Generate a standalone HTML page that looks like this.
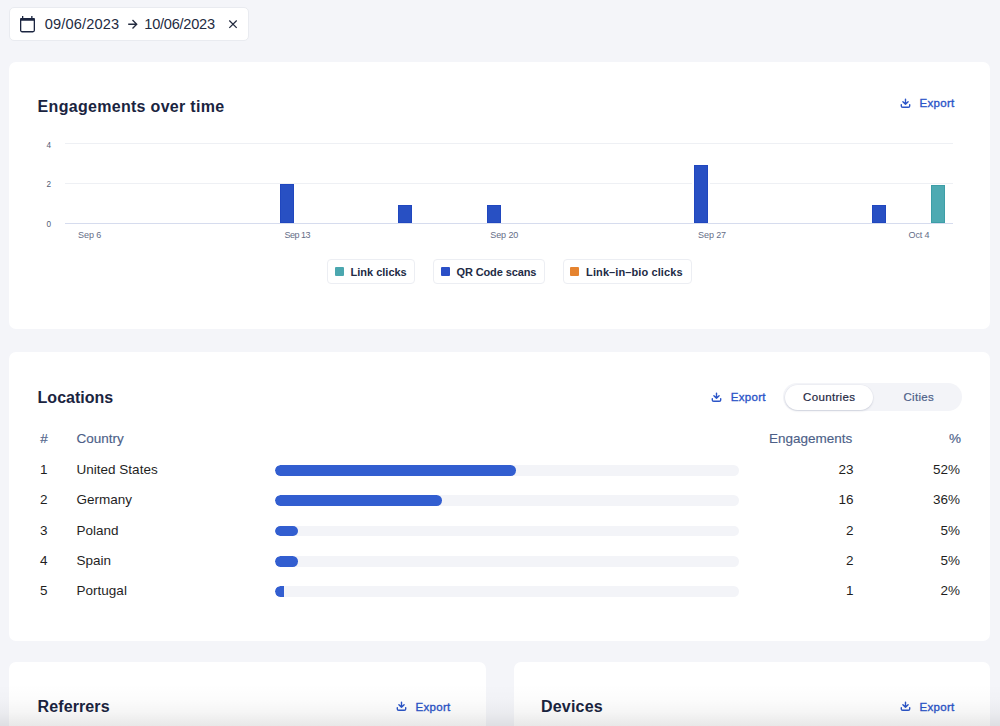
<!DOCTYPE html>
<html><head><meta charset="utf-8">
<style>
*{box-sizing:border-box;margin:0;padding:0}
html,body{width:1000px;height:726px;overflow:hidden;background:#f4f5f9;font-family:"Liberation Sans",sans-serif;position:relative}
.abs{position:absolute}
.t{position:absolute;white-space:nowrap;line-height:1}
.card{position:absolute;background:#fff;border-radius:7px}
.title{font-weight:700;color:#1a2440;font-size:16px}
.exp{color:#2b55c8;font-weight:400;font-size:11.5px;letter-spacing:0.3px;-webkit-text-stroke:0.35px #2b55c8}
.ylab{color:#535c75;font-size:8.2px}
.xlab{color:#646d87;font-size:9px;letter-spacing:-0.1px}
.grid{position:absolute;left:64.5px;width:888.5px;height:1px;background:#eef0f4}
.bar{position:absolute;width:14px;background:#2850c3;border:1px solid #2047bf;border-width:1px 0.6px 0.6px 0.6px;box-shadow:2px 0 0 #fff,-2px 0 0 #fff}
.leg{position:absolute;top:259px;height:25px;border:1px solid #eceef3;border-radius:4px;background:#fff}
.sw{position:absolute;width:9px;height:9px;top:7.2px;border-radius:1px}
.legt{position:absolute;top:7.2px;font-weight:700;font-size:11px;color:#222b45;white-space:nowrap;line-height:1}
.hd{color:#4d5f88;font-size:13.5px;-webkit-text-stroke:0.15px #4d5f88}
.rw{color:#1f1f1f;font-size:13.5px}
.track{position:absolute;left:274.5px;width:464.3px;height:10.8px;background:#f3f4f8;border-radius:5.4px;overflow:hidden}
.fill{position:absolute;left:0;top:0;height:100%;background:#325ed0;border-radius:5.4px}
</style></head><body>

<!-- date range -->
<div class="abs" style="left:9.3px;top:7.2px;width:240px;height:33.8px;background:#fff;border:1px solid #e9ebf0;border-radius:5px"></div>
<svg class="abs" style="left:19px;top:15px" width="17" height="18" viewBox="0 0 17 18">
  <rect x="1.65" y="3.55" width="13.7" height="13.2" rx="1.5" fill="none" stroke="#1b2540" stroke-width="1.3"/>
  <rect x="1.2" y="2.9" width="14.6" height="2.8" rx="0.8" fill="#1b2540"/>
  <rect x="3.0" y="1" width="1.3" height="3" fill="#1b2540"/>
  <rect x="12.2" y="1" width="1.3" height="3" fill="#1b2540"/>
</svg>
<div class="t" style="left:44.8px;top:16.5px;font-size:14.6px;color:#232b3f;letter-spacing:0.15px">09/06/2023</div>
<svg class="abs" style="left:127px;top:18.5px" width="12" height="11" viewBox="0 0 12 11">
  <path d="M1.2 5.2H9.6M5.5 1L9.7 5.2L5.5 9.4" fill="none" stroke="#232b3f" stroke-width="1.35"/>
</svg>
<div class="t" style="left:144.3px;top:16.5px;font-size:14.6px;color:#232b3f;letter-spacing:-0.25px">10/06/2023</div>
<svg class="abs" style="left:228px;top:19px" width="10" height="10" viewBox="0 0 10 10">
  <path d="M1.3 1.5L8.7 8.9M8.7 1.5L1.3 8.9" fill="none" stroke="#232b3f" stroke-width="1.25"/>
</svg>

<!-- card 1 -->
<div class="card" style="left:9.4px;top:61.8px;width:980.3px;height:267.7px"></div>
<div class="t title" style="left:37.6px;top:98.8px;letter-spacing:0.3px">Engagements over time</div>
<svg class="abs" style="left:899px;top:97px" width="13" height="12" viewBox="0 0 13 12">
  <path d="M6.5 2.1V7.3M3.9 4.7L6.5 7.3L9.1 4.7M2.3 7.6V8.9Q2.3 10.3 3.7 10.3H9.3Q10.7 10.3 10.7 8.9V7.6" fill="none" stroke="#2b55c8" stroke-width="1.4" stroke-linecap="round" stroke-linejoin="round"/>
</svg>
<div class="t exp" style="left:919.5px;top:98px">Export</div>

<div class="grid" style="top:143.3px"></div>
<div class="grid" style="top:183.1px"></div>
<div class="grid" style="top:222.9px;background:#d6dcee"></div>
<div class="t ylab" style="left:46.6px;top:141.7px">4</div>
<div class="t ylab" style="left:46.6px;top:181.2px">2</div>
<div class="t ylab" style="left:46.6px;top:220.7px">0</div>
<div class="t xlab" style="left:78.1px;top:230.8px">Sep 6</div>
<div class="t xlab" style="left:284.5px;top:230.8px;letter-spacing:-0.5px">Sep 13</div>
<div class="t xlab" style="left:490.3px;top:230.8px">Sep 20</div>
<div class="t xlab" style="left:698.1px;top:230.8px">Sep 27</div>
<div class="t xlab" style="left:908.5px;top:230.8px">Oct 4</div>

<div class="bar" style="left:280px;top:184.4px;height:38.4px"></div>
<div class="bar" style="left:398.2px;top:204.6px;height:18.2px"></div>
<div class="bar" style="left:486.6px;top:204.6px;height:18.2px"></div>
<div class="bar" style="left:694px;top:165.2px;height:57.6px"></div>
<div class="bar" style="left:871.9px;top:204.5px;height:18.3px"></div>
<div class="bar" style="left:931.3px;top:184.7px;height:38.1px;background:#4eaab2;border-color:#3d9ea7"></div>

<div class="leg" style="left:327.2px;width:88px"><div class="sw" style="left:6.4px;background:#4ba7af"></div><div class="legt" style="left:22.3px">Link clicks</div></div>
<div class="leg" style="left:433.2px;width:111.5px"><div class="sw" style="left:6.4px;background:#2a4fc7"></div><div class="legt" style="left:22.3px"><span style="letter-spacing:-0.12px">QR Code scans</span></div></div>
<div class="leg" style="left:562.8px;width:129px"><div class="sw" style="left:6.4px;background:#e5832f"></div><div class="legt" style="left:22.3px"><span style="letter-spacing:0.1px">Link&ndash;in&ndash;bio clicks</span></div></div>

<!-- card 2 -->
<div class="card" style="left:9.4px;top:351.8px;width:980.3px;height:288.8px"></div>
<div class="t title" style="left:37.6px;top:389.5px">Locations</div>
<svg class="abs" style="left:710px;top:390.7px" width="13" height="12" viewBox="0 0 13 12">
  <path d="M6.5 2.1V7.3M3.9 4.7L6.5 7.3L9.1 4.7M2.3 7.6V8.9Q2.3 10.3 3.7 10.3H9.3Q10.7 10.3 10.7 8.9V7.6" fill="none" stroke="#2b55c8" stroke-width="1.4" stroke-linecap="round" stroke-linejoin="round"/>
</svg>
<div class="t exp" style="left:730.8px;top:392.2px">Export</div>
<div class="abs" style="left:783px;top:383.3px;width:179px;height:28px;background:#f3f4f8;border-radius:14px"></div>
<div class="abs" style="left:784.6px;top:384.9px;width:88.2px;height:25.3px;background:#fff;border-radius:12.6px;box-shadow:0 1px 2px rgba(30,40,80,0.15),0 0 0 0.5px rgba(30,40,80,0.03)"></div>
<div class="t" style="left:803px;top:391.8px;font-size:11.5px;letter-spacing:0.35px;font-weight:400;color:#1e2843;-webkit-text-stroke:0.2px #1e2843">Countries</div>
<div class="t" style="left:903.5px;top:391.8px;font-size:11.5px;letter-spacing:0.3px;color:#4d5f88;-webkit-text-stroke:0.2px #4d5f88">Cities</div>

<div class="t hd" style="left:40.3px;top:432.2px">#</div>
<div class="t hd" style="left:76.5px;top:432.2px">Country</div>
<div class="t hd" style="left:769px;top:432.2px">Engagements</div>
<div class="t hd" style="left:949px;top:432.2px">%</div>

<div class="t rw" style="left:40px;top:462.7px">1</div>
<div class="t rw" style="left:76.6px;top:462.7px">United States</div>
<div class="track" style="top:464.8px"><div class="fill" style="width:241.6px"></div></div>
<div class="t rw" style="right:146.5px;top:462.7px">23</div>
<div class="t rw" style="right:40px;top:462.7px">52%</div>

<div class="t rw" style="left:40px;top:493.2px">2</div>
<div class="t rw" style="left:76.6px;top:493.2px">Germany</div>
<div class="track" style="top:495.2px"><div class="fill" style="width:167.2px"></div></div>
<div class="t rw" style="right:146.5px;top:493.2px">16</div>
<div class="t rw" style="right:40px;top:493.2px">36%</div>

<div class="t rw" style="left:40px;top:523.5px">3</div>
<div class="t rw" style="left:76.6px;top:523.5px">Poland</div>
<div class="track" style="top:525.6px"><div class="fill" style="width:23.5px"></div></div>
<div class="t rw" style="right:146.5px;top:523.5px">2</div>
<div class="t rw" style="right:40px;top:523.5px">5%</div>

<div class="t rw" style="left:40px;top:553.8px">4</div>
<div class="t rw" style="left:76.6px;top:553.8px">Spain</div>
<div class="track" style="top:555.9px"><div class="fill" style="width:23.5px"></div></div>
<div class="t rw" style="right:146.5px;top:553.8px">2</div>
<div class="t rw" style="right:40px;top:553.8px">5%</div>

<div class="t rw" style="left:40px;top:584.2px">5</div>
<div class="t rw" style="left:76.6px;top:584.2px">Portugal</div>
<div class="track" style="top:586.3px"><div class="fill" style="width:9.6px;border-radius:5.4px 0 0 5.4px"></div></div>
<div class="t rw" style="right:146.5px;top:584.2px">1</div>
<div class="t rw" style="right:40px;top:584.2px">2%</div>

<!-- card 3 & 4 -->
<div class="card" style="left:9.4px;top:661.8px;width:476.7px;height:120px"></div>
<div class="card" style="left:513.8px;top:661.8px;width:475.9px;height:120px"></div>
<div class="t title" style="left:37.6px;top:698.8px;letter-spacing:0.1px">Referrers</div>
<svg class="abs" style="left:395px;top:700px" width="13" height="12" viewBox="0 0 13 12">
  <path d="M6.5 2.1V7.3M3.9 4.7L6.5 7.3L9.1 4.7M2.3 7.6V8.9Q2.3 10.3 3.7 10.3H9.3Q10.7 10.3 10.7 8.9V7.6" fill="none" stroke="#2b55c8" stroke-width="1.4" stroke-linecap="round" stroke-linejoin="round"/>
</svg>
<div class="t exp" style="left:415.5px;top:701.8px">Export</div>
<div class="t title" style="left:541px;top:698.8px;letter-spacing:0.2px">Devices</div>
<svg class="abs" style="left:899px;top:700px" width="13" height="12" viewBox="0 0 13 12">
  <path d="M6.5 2.1V7.3M3.9 4.7L6.5 7.3L9.1 4.7M2.3 7.6V8.9Q2.3 10.3 3.7 10.3H9.3Q10.7 10.3 10.7 8.9V7.6" fill="none" stroke="#2b55c8" stroke-width="1.4" stroke-linecap="round" stroke-linejoin="round"/>
</svg>
<div class="t exp" style="left:919.5px;top:701.8px">Export</div>

<!-- bottom fade -->
<div class="abs" style="left:0;top:684px;width:1000px;height:42px;background:linear-gradient(to bottom,rgba(0,0,0,0) 0%,rgba(0,0,0,0.012) 35%,rgba(0,0,0,0.04) 68%,rgba(0,0,0,0.092) 100%)"></div>
</body></html>
